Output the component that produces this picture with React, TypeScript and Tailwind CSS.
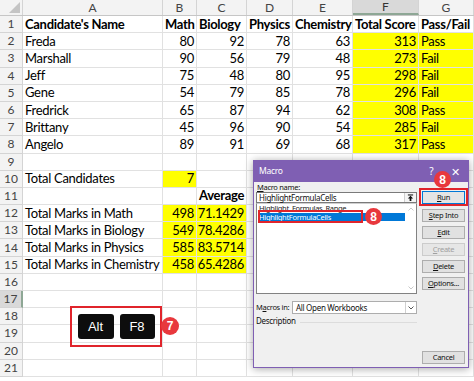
import React from "react";

type Cell = { v?: string; r?: boolean; b?: boolean; y?: boolean };

const COLS = "grid grid-cols-[23px_140px_34px_50px_46px_60px_66px_55px]";

const n = (v: string, y = false): Cell => ({ v, r: true, y });
const t = (v: string, y = false, b = false): Cell => ({ v, y, b });

const rows: Cell[][] = [
  [t("Candidate's Name", false, true), t("Math", false, true), t("Biology", false, true), t("Physics", false, true), t("Chemistry", false, true), t("Total Score", false, true), t("Pass/Fail", false, true)],
  [t("Freda"), n("80"), n("92"), n("78"), n("63"), n("313", true), t("Pass", true)],
  [t("Marshall"), n("90"), n("56"), n("79"), n("48"), n("273", true), t("Fail", true)],
  [t("Jeff"), n("75"), n("48"), n("80"), n("95"), n("298", true), t("Fail", true)],
  [t("Gene"), n("54"), n("79"), n("85"), n("78"), n("296", true), t("Fail", true)],
  [t("Fredrick"), n("65"), n("87"), n("94"), n("62"), n("308", true), t("Pass", true)],
  [t("Brittany"), n("45"), n("96"), n("90"), n("54"), n("285", true), t("Fail", true)],
  [t("Angelo"), n("89"), n("91"), n("69"), n("68"), n("317", true), t("Pass", true)],
  [],
  [t("Total Candidates"), n("7", true)],
  [t(""), t(""), { v: "Average", b: true }],
  [t("Total Marks in Math"), n("498", true), n("71.1429", true)],
  [t("Total Marks in Biology"), n("549", true), n("78.4286", true)],
  [t("Total Marks in Physics"), n("585", true), n("83.5714", true)],
  [t("Total Marks in Chemistry"), n("458", true), n("65.4286", true)],
  [], [], [], [], [], [],
];

function Badge({ num, className }: { num: string; className: string }) {
  return (
    <div className={`absolute flex items-center justify-center rounded-full bg-[#e8383d] text-white font-bold font-['Liberation_Sans',sans-serif] ${className}`}>
      {num}
    </div>
  );
}

function Btn({ label, u, disabled, def }: { label: string; u: string; disabled?: boolean; def?: boolean }) {
  const rest = label.slice(u.length);
  return (
    <div
      className={`flex h-[13px] items-center justify-center border text-[7.5px] ${
        def ? "border-[#0078d7] bg-[#e5e5e5]" : disabled ? "border-[#cccccc] bg-[#e6e6e6] text-[#a0a0a0]" : "border-[#adadad] bg-[#e1e1e1]"
      }`}
    >
      <span className="underline">{u}</span>
      {rest}
    </div>
  );
}

function MacroDialog() {
  return (
    <div className="absolute left-[253px] top-[160px] flex h-[208px] w-[216px] flex-col border border-[#7f5fb3] bg-[#f0f0f0] font-['Noto_Sans',sans-serif] text-[#111] shadow-[0_1px_8px_rgba(0,0,0,0.35)]">
      <div className="flex h-[21px] items-center justify-between bg-[#7f5fb3] pl-[5px] pr-[8px] text-[8.5px] text-white">
        <span>Macro</span>
        <div className="flex items-center gap-[18px] text-[10px]">
          <span>?</span>
          <span className="text-[11px] leading-none">✕</span>
        </div>
      </div>
      <div className="flex flex-1 gap-[5px] pl-[2px]">
        <div className="flex w-[161px] flex-col">
          <div className="h-[10px] pl-[1px] text-[7.5px] leading-[10px]">
            <span className="underline">M</span>acro name:
          </div>
          <div className="flex h-[11px] items-center border border-[#7a7a7a] bg-white">
            <span className="flex-1 pl-[2px] text-[8px] leading-none">HighlightFormulaCells</span>
            <div className="flex h-full w-[12px] items-center justify-center border-l border-[#cfcfcf] bg-[#f5f5f5]">
              <svg width="7" height="7" viewBox="0 0 8 8">
                <rect x="1" y="0.5" width="6" height="1.2" fill="#111" />
                <path d="M4 2 L7 5 H5 V8 H3 V5 H1 Z" fill="#111" />
              </svg>
            </div>
          </div>
          <div className="flex h-[91px] border border-[#828282] border-t-[#cfcfcf] bg-white">
            <div className="flex flex-1 flex-col pl-[1px] text-[7.5px]">
              <div className="h-[9px] pl-[1px] leading-[9px] text-[#222]">Highlight_Formulas_Range</div>
              <div className="h-[8px] bg-[#0078d7] pl-[1px] leading-[8px] text-white">HighlightFormulaCells</div>
            </div>
            <div className="flex w-[11px] flex-col items-center justify-between py-[3px]">
              <svg width="6" height="4" viewBox="0 0 6 4"><path d="M0.5 3.5 L3 1 L5.5 3.5" stroke="#c8c8c8" fill="none" /></svg>
              <svg width="6" height="4" viewBox="0 0 6 4"><path d="M0.5 0.5 L3 3 L5.5 0.5" stroke="#c8c8c8" fill="none" /></svg>
            </div>
          </div>
          <div className="mt-[7px] flex h-[13px] items-center">
            <span className="w-[36px] text-[7.5px]">
              M<span className="underline">a</span>cros in:
            </span>
            <div className="flex h-full flex-1 items-center border border-[#adadad] bg-white">
              <span className="flex-1 pl-[3px] text-[8px]">All Open Workbooks</span>
              <div className="flex h-full w-[11px] items-center justify-center border-l border-[#d0d0d0]">
                <svg width="6" height="4" viewBox="0 0 6 4"><path d="M0.5 0.5 L3 3 L5.5 0.5" stroke="#555" fill="none" /></svg>
              </div>
            </div>
          </div>
          <div className="mt-[2px] flex h-[10px] items-center text-[8px]">
            <span>Description</span>
            <div className="ml-[4px] mt-[2px] h-px flex-1 bg-[#dcdcdc]" />
          </div>
        </div>
        <div className="flex w-[43px] flex-col pt-[9px]">
          <Btn label="Run" u="R" def />
          <div className="mt-[5px] flex flex-col gap-[4px]">
            <Btn label="Step Into" u="S" />
            <Btn label="Edit" u="E" />
            <Btn label="Create" u="C" disabled />
            <Btn label="Delete" u="D" />
            <Btn label="Options..." u="O" />
          </div>
          <div className="mt-[61px]">
            <Btn label="Cancel" u="" />
          </div>
        </div>
      </div>
      <div className="absolute left-[4px] top-[49px] h-[13px] w-[105px] border-2 border-[#e0242b]" />
      <div className="absolute left-[165px] top-[27px] h-[18px] w-[49px] border-2 border-[#e0242b]" />
      <Badge num="8" className="left-[111px] top-[47px] h-[17px] w-[17px] text-[12px]" />
      <Badge num="8" className="left-[180px] top-[10px] h-[17px] w-[17px] text-[12px]" />
    </div>
  );
}

export default function App() {
  const headers = ["A", "B", "C", "D", "E", "F", "G"];
  return (
    <div className="relative h-[381px] w-[474px] overflow-hidden bg-white font-['Lato',sans-serif] text-[13px] tracking-[-0.3px] text-black">
      <div className={`${COLS} h-[16px] border-b border-[#c6c6c6] bg-[#f3f3f3] text-[12px] tracking-normal text-[#444]`}>
        <div className="relative border-r border-[#d4d4d4]">
          <svg className="absolute bottom-[2px] right-[2px]" width="11" height="11" viewBox="0 0 11 11">
            <path d="M11 0 V11 H0 Z" fill="#c4c4c4" />
          </svg>
        </div>
        {headers.map((h) => (
          <div
            key={h}
            className={`flex items-center justify-center border-r border-[#d4d4d4] leading-none ${h === "F" ? "border-b-2 border-b-[#8ea795] bg-[#d9d9d9] text-[#333]" : ""}`}
          >
            {h}
          </div>
        ))}
      </div>
      {rows.map((row, i) => (
        <div key={i} className={`${COLS} h-[17.2px]`}>
          <div
            className={`flex items-center justify-center border-b border-r border-[#d4d4d4] text-[12px] leading-none tracking-normal text-[#444] ${i === 16 ? "border-r-2 border-r-[#8ea795] bg-[#d9d9d9]" : "bg-[#f3f3f3]"}`}
          >
            {i + 1}
          </div>
          {Array.from({ length: 7 }).map((_, j) => {
            const c = row[j];
            return (
              <div
                key={j}
                className={`flex items-center overflow-visible whitespace-nowrap border-b border-r border-[#e1e1e1] px-[2px] leading-none ${c?.r ? "justify-end" : "justify-start"} ${c?.b ? "font-bold" : ""} ${c?.y ? "bg-[#ffff00]" : ""}`}
              >
                {c?.v}
              </div>
            );
          })}
        </div>
      ))}

      <div className="absolute left-[70px] top-[306px] flex h-[41px] w-[92px] items-center justify-center gap-[6px] border-2 border-[#e0242b] font-['Liberation_Sans',sans-serif] tracking-normal">
        <div className="flex h-[25px] w-[36px] items-center justify-center rounded-[3px] bg-[#0d0d0d] text-[13px] text-white">Alt</div>
        <div className="flex h-[25px] w-[35px] items-center justify-center rounded-[3px] bg-[#0d0d0d] text-[13px] text-white">F8</div>
      </div>
      <Badge num="7" className="left-[161px] top-[317px] h-[18px] w-[18px] text-[12px]" />

      <MacroDialog />
    </div>
  );
}
